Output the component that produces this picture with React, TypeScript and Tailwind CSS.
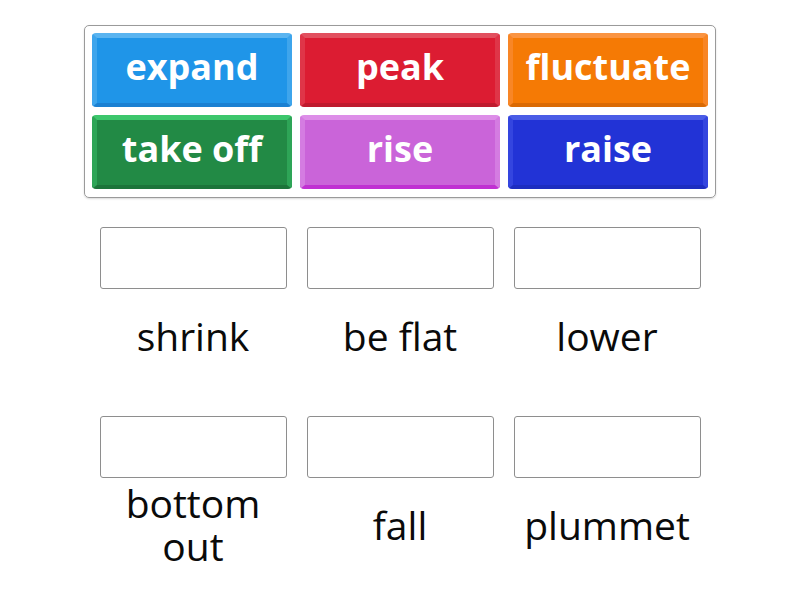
import React from "react";

const tiles = [
  { t: "expand", c: "border-t-[#5ab4f0] border-x-[#3ea5ec] border-b-[#1a80d2] bg-[#1f95e8]" },
  { t: "peak", c: "border-t-[#e2505f] border-x-[#df3548] border-b-[#bf1a2d] bg-[#dc1c32]" },
  { t: "fluctuate", c: "border-t-[#fa9442] border-x-[#f88626] border-b-[#da6a04] bg-[#f57a05]" },
  { t: "take off", c: "border-t-[#3cc66c] border-x-[#2ea557] border-b-[#1c743a] bg-[#228a45]" },
  { t: "rise", c: "border-t-[#dd8ee8] border-x-[#d47ce1] border-b-[#c030d2] bg-[#ca64d9]" },
  { t: "raise", c: "border-t-[#4a5ce6] border-x-[#3445df] border-b-[#1d2dc0] bg-[#2233d6]" },
];

const rows = [
  ["shrink", "be flat", "lower"],
  ["bottom out", "fall", "plummet"],
];

export default function App() {
  return (
    <div className="w-[800px] h-[600px] bg-white flex flex-col items-center pt-[25px]" style={{ fontFamily: '"Open Sans", sans-serif' }}>
      <div className="w-[632px] border border-[#9a9a9a] rounded-[5px] p-[7px] pb-[8px] grid grid-cols-3 gap-[8px] shadow-[0_1px_2px_rgba(0,0,0,0.15)]">
        {tiles.map((x) => (
          <div key={x.t} className={`h-[74px] rounded-[4px] border-t-[5px] border-x-[5px] border-b-[4px] ${x.c} flex items-center justify-center`}>
            <span className="text-white font-bold text-[36px] leading-none -mt-[8px]">{x.t}</span>
          </div>
        ))}
      </div>
      <div className="w-[621px] mt-[29px] flex flex-col gap-[31px]">
        {rows.map((r, i) => (
          <div key={i} className="grid grid-cols-3">
            {r.map((l) => (
              <div key={l} className="flex flex-col items-center">
                <div className="w-[187px] h-[62px] border border-[#8e8e8e] rounded-[3px] bg-white" />
                <div className="h-[96px] pb-[4px] flex items-center justify-center text-center text-[39px] leading-[43px] text-[#0a0a0a] w-[187px]">
                  {l === "bottom out" ? (
                    <span>bottom<br />out</span>
                  ) : (
                    <span>{l}</span>
                  )}
                </div>
              </div>
            ))}
          </div>
        ))}
      </div>
    </div>
  );
}
